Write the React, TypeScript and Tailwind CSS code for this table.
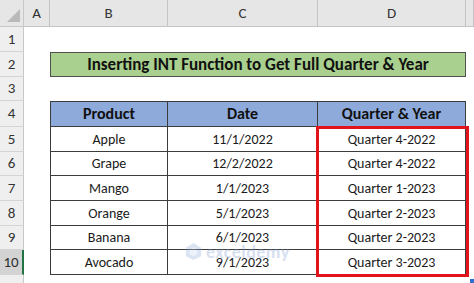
import React from "react";

const rows = [
  { p: "Apple", d: "11/1/2022", q: "Quarter 4-2022" },
  { p: "Grape", d: "12/2/2022", q: "Quarter 4-2022" },
  { p: "Mango", d: "1/1/2023", q: "Quarter 1-2023" },
  { p: "Orange", d: "5/1/2023", q: "Quarter 2-2023" },
  { p: "Banana", d: "6/1/2023", q: "Quarter 2-2023" },
  { p: "Avocado", d: "9/1/2023", q: "Quarter 3-2023" },
];

const font = { fontFamily: "Calibri, Carlito, 'Open Sans', 'Liberation Sans', sans-serif" };

const RowHead = ({ n, active }: { n: number; active?: boolean }) => (
  <div
    className={
      "flex items-center justify-center border-b border-[#d4d4d4] text-[15px] " +
      (active
        ? "bg-[#d3d3d3] text-[#2f2f2f] border-r-2 border-r-[#217346]"
        : "bg-[#efefef] text-[#333] border-r border-r-[#c8c8c8]")
    }
  >
    {n}
  </div>
);

const Empty = () => <div className="bg-white" />;

export default function App() {
  return (
    <div className="relative w-[474px] h-[283px] overflow-hidden bg-white" style={font}>
      <div className="grid grid-cols-[24px_26px_118px_150px_148px_1fr] grid-rows-[27px_25px_25px_24px_26px_25px_24px_25px_25px_24px_25px_1fr] h-full">
        {/* column headers */}
        <div className="relative bg-[#e6e6e6] border-r border-b border-[#c8c8c8]">
          <div className="absolute right-[3px] bottom-[4px] w-0 h-0 border-l-[13px] border-l-transparent border-b-[13px] border-b-[#b9b9b9]" />
        </div>
        {["A", "B", "C", "D", ""].map((c, i) => (
          <div
            key={i}
            className="flex items-center justify-center bg-[#e6e6e6] border-r border-b border-[#c4c4c4] text-[15px] text-[#333]"
          >
            {c}
          </div>
        ))}

        {/* row 1 */}
        <RowHead n={1} />
        <Empty /><Empty /><Empty /><Empty /><Empty />

        {/* row 2 */}
        <RowHead n={2} />
        <Empty />
        <div className="col-span-3 flex items-center justify-center bg-[#a9d08e] border border-[#505050] text-[17px] font-bold text-[#111]">
          Inserting INT Function to Get Full Quarter &amp; Year
        </div>
        <Empty />

        {/* row 3 */}
        <RowHead n={3} />
        <Empty /><Empty /><Empty /><Empty /><Empty />

        {/* row 4 - table header */}
        <RowHead n={4} />
        <Empty />
        {["Product", "Date", "Quarter & Year"].map((h, i) => (
          <div
            key={h}
            className={
              "flex items-center justify-center bg-[#8eaadb] border-t border-b border-r border-[#3c3c3c] text-[16px] font-bold text-[#111] " +
              (i === 0 ? "border-l" : "")
            }
          >
            {h}
          </div>
        ))}
        <Empty />

        {rows.map((r, idx) => (
          <React.Fragment key={r.p}>
            <RowHead n={idx + 5} active={idx === 5} />
            <Empty />
            {[r.p, r.d, r.q].map((v, i) => (
              <div
                key={i}
                className={
                  "flex items-center justify-center bg-white border-b border-r border-[#3c3c3c] text-[14px] text-[#1a1a1a] " +
                  (i === 0 ? "border-l" : "")
                }
              >
                {v}
              </div>
            ))}
            <Empty />
          </React.Fragment>
        ))}

        {/* row 11 partial */}
        <div className="bg-[#efefef] border-r border-[#c8c8c8]" />
        <Empty /><Empty /><Empty /><Empty /><Empty />
      </div>

      {/* watermark */}
      <div className="absolute left-[184px] top-[242px] flex items-center gap-[3px] opacity-30 pointer-events-none">
        <svg width="19" height="19" viewBox="0 0 20 20">
          <path d="M10 1 L18 6 L18 15 L10 19 L2 15 L2 6 Z" fill="#8aa7d8" />
          <path d="M10 6 L14 8.5 L14 13 L10 15 L6 13 L6 8.5 Z" fill="#c9d7ef" />
        </svg>
        <span className="text-[18px] font-bold text-[#7d9ad0] tracking-[0.5px] leading-none">exceldemy</span>
      </div>

      {/* selection highlight */}
      <div className="absolute left-[316px] top-[126px] w-[153px] h-[151px] border-[3px] border-[#e3131b] pointer-events-none" />
      <div className="absolute left-[469px] top-[278px] w-[6px] h-[6px] bg-[#2f6fd0] border border-white" />
    </div>
  );
}
